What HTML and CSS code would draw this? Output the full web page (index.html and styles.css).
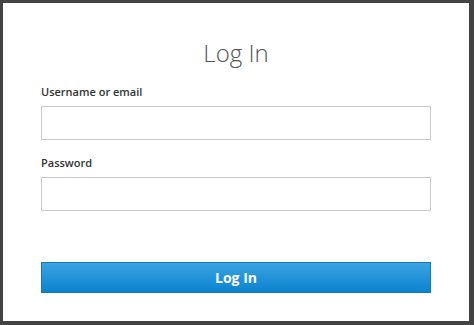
FILE: index.html
```html
<!DOCTYPE html>
<html lang="en">
<head>
    <meta charset="UTF-8">
    <meta name="viewport" content="width=device-width, initial-scale=1.0">
    <title>Log In</title>
    <link rel="stylesheet" href="styles.css">
</head>
<body>
    <div class="login-box">
        <h1>Log In</h1>
        <form method="post">
            <label for="username">Username or email</label>
            <input type="text" id="username" name="username">

            <label for="password">Password</label>
            <input type="password" id="password" name="password">

            <button type="submit">Log In</button>
        </form>
    </div>
</body>
</html>
```

FILE: styles.css
```css
html, body {
    height: 100%;
}
body {
    margin: 0;
    padding: 3px 5px 4px 3px;
    box-sizing: border-box;
    background: #434343;
    font-family: "Open Sans", Arial, sans-serif;
}
.login-box {
    background: #fff;
    height: 100%;
    padding: 34px 38px 0 38px;
    box-sizing: border-box;
}
h1 {
    margin: 0;
    font-size: 24px;
    font-weight: 300;
    line-height: 32px;
    color: #555;
    text-align: center;
}
form {
    display: flex;
    flex-direction: column;
}
label {
    display: block;
    margin-top: 15px;
    font-size: 11px;
    font-weight: 600;
    line-height: 16px;
    color: #333;
}
input {
    margin-top: 6px;
    height: 34px;
    box-sizing: border-box;
    border: 1px solid #c9c9c9;
    background: #fff;
    padding: 6px 8px;
    font-size: 14px;
}
button {
    margin-top: 51px;
    height: 31px;
    border: 1px solid #1677bb;
    background: linear-gradient(to bottom, #3ca4e2, #0a83cf);
    color: #fff;
    font-family: "Open Sans", Arial, sans-serif;
    font-size: 14px;
    font-weight: 700;
    line-height: 29px;
    padding: 0;
    cursor: pointer;
}
```
